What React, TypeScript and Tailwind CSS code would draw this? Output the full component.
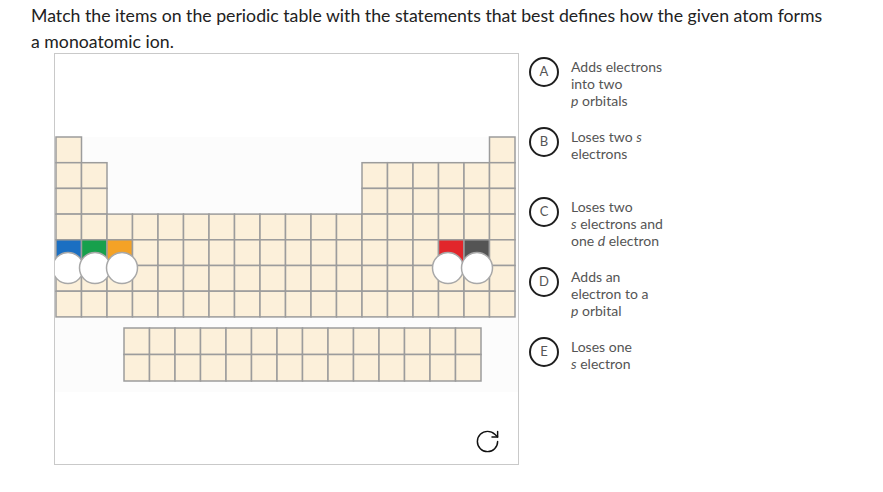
import { RotateCw } from "lucide-react";

const CW = 25.5;
const RH = 25.7;
const X0 = 56;
const Y0 = 137;

const rowCols = (r: number) => {
  if (r === 1) return [1, 18];
  if (r === 2 || r === 3) return [1, 2, 13, 14, 15, 16, 17, 18];
  return Array.from({ length: 18 }, (_, i) => i + 1);
};

const colored: Record<string, string> = {
  "5-1": "#1b6fc2",
  "5-2": "#17a04c",
  "5-3": "#f4a226",
  "5-16": "#e2262b",
  "5-17": "#545454",
};

const PeriodicTable = () => {
  const cells = [];
  for (let r = 1; r <= 7; r++) {
    for (const c of rowCols(r)) {
      cells.push(
        <rect
          key={`${r}-${c}`}
          x={X0 + (c - 1) * CW}
          y={Y0 + (r - 1) * RH}
          width={CW}
          height={RH}
          fill={colored[`${r}-${c}`] ?? "#fcf0da"}
          stroke="#9c9c9c"
          strokeWidth={1.5}
        />
      );
    }
  }
  for (let r = 0; r < 2; r++) {
    for (let c = 0; c < 14; c++) {
      cells.push(
        <rect
          key={`f-${r}-${c}`}
          x={124 + c * CW}
          y={328 + r * 26.5}
          width={CW}
          height={26.5}
          fill="#fcf0da"
          stroke="#9c9c9c"
          strokeWidth={1.5}
        />
      );
    }
  }

  return (
    <svg viewBox="55 54 463 410" width={463} height={410} className="block">
      <rect x={55} y={137} width={463} height={255} fill="#fcfcfc" />
      {cells}
      {[68, 95, 122, 448, 477].map((cx) => (
        <circle key={cx} cx={cx} cy={268} r={15.5} fill="#fff" stroke="#a8a8a8" strokeWidth={1.5} />
      ))}
    </svg>
  );
};

const options = [
  { k: "A", text: <>Adds electrons<br />into two<br /><i>p</i> orbitals</> },
  { k: "B", text: <>Loses two <i>s</i><br />electrons</> },
  { k: "C", text: <>Loses two<br /><i>s</i> electrons and<br />one <i>d</i> electron</> },
  { k: "D", text: <>Adds an<br />electron to a<br /><i>p</i> orbital</> },
  { k: "E", text: <>Loses one<br /><i>s</i> electron</> },
];

export default function App() {
  return (
    <div className="h-[492px] w-[883px] bg-white font-['Lato','Liberation_Sans',sans-serif]">
      <div className="h-[53px] whitespace-nowrap pl-[31px] pt-[3px] text-[17.7px] leading-[26px] text-[#222]">
        Match the items on the periodic table with the statements that best defines how the given atom forms
        <br />
        a monoatomic ion.
      </div>

      <div className="flex pl-[54px]">
        <div className="relative h-[412px] w-[465px] border border-[#c9c9c9]">
          <PeriodicTable />
          <RotateCw
            className="absolute left-[419px] top-[374px] text-[#111]"
            size={27}
            strokeWidth={1.3}
          />
        </div>

        <div className="ml-[10px] flex flex-col pt-[4px]">
          {options.map((o) => (
            <div key={o.k} className="flex h-[70px] items-start gap-[12px]">
              <div className="flex h-[30px] w-[30px] shrink-0 items-center justify-center rounded-full border-2 border-[#1e1e1e] text-[13px] text-[#555]">
                {o.k}
              </div>
              <div className="whitespace-nowrap pt-[1px] text-[14px] leading-[17px] text-[#555]">
                {o.text}
              </div>
            </div>
          ))}
        </div>
      </div>
    </div>
  );
}
